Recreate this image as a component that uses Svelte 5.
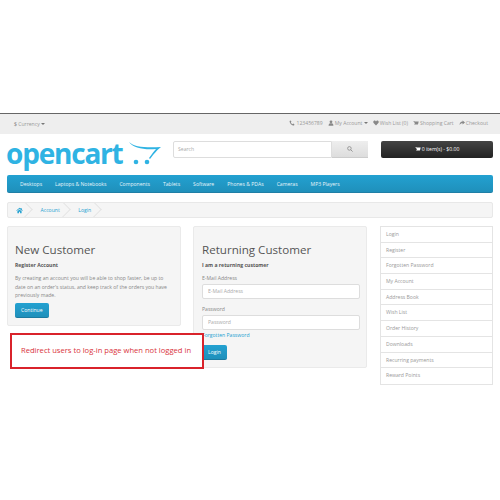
<script>
  const nav = ['Desktops', 'Laptops & Notebooks', 'Components', 'Tablets', 'Software', 'Phones & PDAs', 'Cameras', 'MP3 Players'];
  const links = ['Login', 'Register', 'Forgotten Password', 'My Account', 'Address Book', 'Wish List', 'Order History', 'Downloads', 'Recurring payments', 'Reward Points'];
</script>

<div class="page">
  <div class="topbar">
    <span class="currency"><b>$</b> Currency <i class="caret"></i></span>
    <div class="toplinks">
      <span><svg viewBox="0 0 10 10" class="ico"><path d="M1 1.5 3 1l1 2-1 1c.6 1.300 1.500 2.200 3 3l1-1 2 1-.5 2C4.500 9 1 5.500 1 1.500z"/></svg>123456789</span>
      <span><svg viewBox="0 0 10 10" class="ico"><circle cx="5" cy="3" r="2.300"/><path d="M1 9.500c0-3 1.500-4 4-4s4 1 4 4z"/></svg>My Account <i class="caret"></i></span>
      <span><svg viewBox="0 0 10 10" class="ico"><path d="M5 9.200 1 5C-.3 3 1 1 2.800 1 3.800 1 4.600 1.600 5 2.300 5.400 1.600 6.200 1 7.200 1 9 1 10.300 3 9 5z"/></svg>Wish List (0)</span>
      <span><svg viewBox="0 0 10 10" class="ico"><path d="M.5 1.500h1.700l.3 1h7l-1 4h-5l-.2 1h5v.8H2.500L3 6 1.600 2.300H.5z"/></svg>Shopping Cart</span>
      <span><svg viewBox="0 0 10 10" class="ico"><path d="M6 1l4 3.200L6 7.400V5.500C3.500 5.500 2 6.500.8 8.500c0-3.500 2-6 5.200-6.200z"/></svg>Checkout</span>
    </div>
  </div>

  <header class="header">
    <div class="logo">
      <span class="logotext">opencart</span>
      <svg class="cart" viewBox="0 0 36 26" width="36" height="26">
        <path d="M1 1C6 6 18 7 33 6 28 10 26 13 22 18L21 17C24 13 26 10 28 8 16 9 5 7 1 1z" fill="#2fb3e3"/>
        <circle cx="8" cy="21" r="2.300" fill="#2fb3e3"/>
        <circle cx="19" cy="21" r="2.300" fill="#2fb3e3"/>
      </svg>
    </div>
    <div class="search">
      <span class="searchinput">Search</span>
      <span class="searchbtn"><svg viewBox="0 0 10 10" width="6" height="6"><circle cx="4" cy="4" r="3" fill="none" stroke="#888" stroke-width="1.300"/><path d="M6.300 6.300 9.300 9.300" stroke="#888" stroke-width="1.400"/></svg></span>
    </div>
    <div class="cartbtn"><svg viewBox="0 0 10 10" class="ico white"><path d="M.5 1.500h1.700l.3 1h7l-1 4h-5l-.2 1h5v.8H2.500L3 6 1.600 2.300H.5z"/></svg>0 item(s) - $0.00</div>
  </header>

  <nav class="nav">
    {#each nav as item}
      <span>{item}</span>
    {/each}
  </nav>

  <div class="crumbs">
    <span class="crumb home"><svg viewBox="0 0 10 10" width="7" height="7"><path d="M5 1 .5 5l.6.7L5 2.400l3.900 3.300.6-.7L8 2.800V1.300H7V2zM2 6v3h2.200V6.800h1.600V9H8V6L5 3.400z" fill="#23a1d1"/></svg></span>
    <span class="crumb">Account</span>
    <span class="crumb">Login</span>
  </div>

  <main class="content">
    <section class="well newc">
      <h2>New Customer</h2>
      <p class="strong">Register Account</p>
      <p class="blurb">By creating an account you will be able to shop faster, be up to date on an order's status, and keep track of the orders you have previously made.</p>
      <span class="btn">Continue</span>
    </section>

    <section class="well ret">
      <h2>Returning Customer</h2>
      <p class="strong">I am a returning customer</p>
      <div class="label">E-Mail Address</div>
      <div class="input">E-Mail Address</div>
      <div class="label pw">Password</div>
      <div class="input">Password</div>
      <div class="forgot">Forgotten Password</div>
      <span class="btn">Login</span>
    </section>

    <aside class="list">
      {#each links as link}
        <div class="row">{link}</div>
      {/each}
    </aside>

    <div class="note">Redirect users to log-in page when not logged in</div>
  </main>
</div>

<style>
  :global(body) {
    margin: 0;
    background: #fff;
  }
  .page {
    width: 500px;
    height: 500px;
    overflow: hidden;
    padding-top: 113px;
    box-sizing: border-box;
    font-family: "Open Sans", sans-serif;
    font-size: 5.100px;
    color: #777;
  }
  .ico {
    width: 6px;
    height: 6px;
    fill: #888;
    margin-right: 1px;
    vertical-align: -1px;
  }
  .ico.white {
    fill: #fff;
  }
  .caret {
    display: inline-block;
    border: 2px solid transparent;
    border-top-color: #777;
    border-bottom: 0;
    vertical-align: 1px;
  }
  .topbar {
    height: 20px;
    background: #eee;
    border-top: 1px solid #666;
    display: flex;
    align-items: center;
    justify-content: space-between;
    padding: 0 12px 0 14px;
    color: #999;
  }
  .toplinks {
    display: flex;
    gap: 5px;
    margin-top: -3px;
  }
  .currency b {
    font-weight: 700;
  }
  .header {
    height: 41px;
    display: flex;
  }
  .logo {
    width: 173px;
    box-sizing: border-box;
    padding-left: 6px;
    display: flex;
  }
  .logotext {
    font-weight: 700;
    font-size: 28px;
    line-height: 38px;
    letter-spacing: -1.200px;
    color: #2fb3e3;
  }
  .cart {
    flex: none;
    margin: 7px 0 0 5px;
  }
  .search {
    width: 195px;
    height: 17px;
    margin-top: 7px;
    display: flex;
  }
  .searchinput {
    flex: 1;
    background: #fff;
    border: 1px solid #ddd;
    border-radius: 2px 0 0 2px;
    padding-left: 4px;
    line-height: 15px;
    color: #aaa;
  }
  .searchbtn {
    width: 36px;
    background: linear-gradient(#eee, #ddd);
    border-bottom: 1px solid #ccc;
    display: flex;
    align-items: center;
    justify-content: center;
  }
  .cartbtn {
    width: 112px;
    height: 17px;
    margin: 7px 0 0 13px;
    background: linear-gradient(#444, #222);
    border-radius: 2px;
    color: #fff;
    text-align: center;
    line-height: 17px;
  }
  .nav {
    height: 18px;
    margin: 0 7px;
    background: linear-gradient(#23a1d1, #1f90bb);
    border-radius: 2px;
    border-bottom: 1px solid #1f7fa6;
    display: flex;
    align-items: center;
    gap: 13px;
    padding-left: 13px;
    color: #e8f5fa;
    box-sizing: border-box;
  }
  .crumbs {
    height: 16px;
    margin: 9px 7px 0;
    background: #f5f5f5;
    border: 1px solid #e8e8e8;
    border-radius: 2px;
    display: flex;
    align-items: center;
    box-sizing: border-box;
    overflow: hidden;
    color: #23a1d1;
  }
  .crumb {
    padding: 0 9px 0 9.500px;
    position: relative;
    line-height: 14px;
  }
  .crumb.home {
    padding: 0 8px;
    display: flex;
    align-items: center;
    height: 14px;
  }
  .crumb::after {
    content: "";
    position: absolute;
    right: 0;
    top: 0;
    width: 13px;
    height: 13px;
    border-top: 1px solid #e4e4e4;
    border-right: 1px solid #e4e4e4;
    transform: rotate(45deg) scale(0.9);
    box-sizing: border-box;
  }
  .content {
    position: relative;
    margin: 8px 7px 0;
    display: flex;
    align-items: flex-start;
  }
  .well {
    width: 174px;
    box-sizing: border-box;
    background: #f5f5f5;
    border: 1px solid #eaeaea;
    border-radius: 2px;
    padding: 15px 7px 0;
  }
  .newc {
    height: 100px;
  }
  .ret {
    height: 142px;
    margin-left: 12px;
    padding-left: 8px;
  }
  h2 {
    margin: 0;
    font-size: 11.600px;
    font-weight: 400;
    line-height: 16px;
    color: #555;
  }
  p {
    margin: 0;
  }
  .strong {
    font-weight: 700;
    line-height: 8px;
    margin-top: 3px;
    color: #555;
  }
  .blurb {
    margin-top: 5px;
    line-height: 8.500px;
    color: #888;
  }
  .newc .btn {
    margin-top: 3px;
  }
  .btn {
    display: block;
    width: fit-content;
    padding: 0 6px;
    height: 14px;
    line-height: 14px;
    background: linear-gradient(#23a1d1, #1f90bb);
    border-radius: 2px;
    border-bottom: 1px solid #1b7aa0;
    color: #fff;
  }
  .label {
    margin-top: 5px;
    line-height: 8px;
    color: #888;
  }
  .pw {
    margin-top: 6px;
  }
  .input {
    height: 15px;
    width: 158px;
    box-sizing: border-box;
    margin-top: 2px;
    background: #fff;
    border: 1px solid #ddd;
    border-radius: 2px;
    padding-left: 5px;
    line-height: 13px;
    color: #aaa;
  }
  .forgot {
    line-height: 8px;
    margin-top: 1px;
    color: #23a1d1;
  }
  .ret .btn {
    margin-top: 6px;
  }
  .list {
    width: 113px;
    margin-left: 13px;
    box-sizing: border-box;
    border: 1px solid #e4e4e4;
  }
  .row {
    height: 15.700px;
    line-height: 15px;
    padding-left: 5px;
    border-bottom: 1px solid #e4e4e4;
    box-sizing: border-box;
    color: #999;
  }
  .row:last-child {
    border-bottom: 0;
  }
  .note {
    position: absolute;
    left: 3px;
    top: 107px;
    width: 194px;
    height: 36px;
    box-sizing: border-box;
    border: 2px solid #d9232b;
    background: #fff;
    color: #d9333b;
    font-size: 7.600px;
    line-height: 30px;
    padding-left: 9px;
    white-space: nowrap;
  }
</style>
